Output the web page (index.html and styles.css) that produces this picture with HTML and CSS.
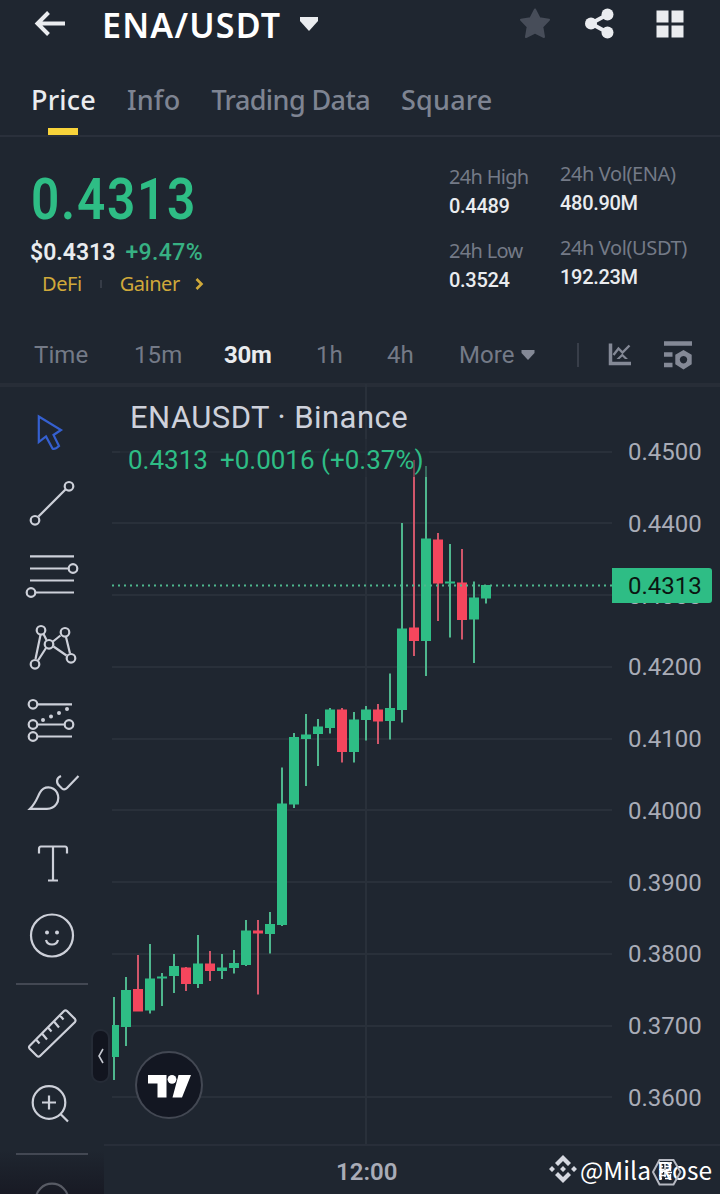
FILE: index.html
```html
<!DOCTYPE html>
<html lang="en">
<head>
    <meta charset="UTF-8" />
    <meta name="viewport" content="width=device-width, initial-scale=1.0" />
    <title>ENA/USDT</title>
    <link rel="stylesheet" href="styles.css">
</head>
<body>
    <header class="topbar">
        <svg class="back" width="32" height="26" viewBox="34 11 32 26">
            <path d="M48.500 12.500 L37.500 23.500 L48.500 34.500 M38 23.500 H65" fill="none" stroke="#eaecef" stroke-width="4" />
        </svg>
        <h1>ENA/USDT</h1>
        <svg class="caret" width="20" height="16" viewBox="0 0 20 16">
            <path d="M1 1 H19 V5 L10 15 L1 5 Z" fill="#eaecef" />
        </svg>
        <div class="actions">
            <svg width="32" height="32" viewBox="519 8 32 32">
                <path d="M535 9.500 L539.500 18.300 L549 19.700 L542.300 26.700 L544 37 L535 32.600 L526 37 L527.700 26.700 L521 19.700 L530.500 18.300 Z" fill="#474d59" stroke="#474d59" stroke-width="2" stroke-linejoin="round" />
            </svg>
            <svg width="32" height="32" viewBox="584 8 32 32">
                <g fill="#eaecef">
                    <circle cx="607.500" cy="14.500" r="6" />
                    <circle cx="591" cy="23.500" r="6" />
                    <circle cx="607.500" cy="32.500" r="6" />
                </g>
                <path d="M607.500 14.500 L591 23.500 L607.500 32.500" fill="none" stroke="#eaecef" stroke-width="4" />
            </svg>
            <svg width="28" height="28" viewBox="656 9.500 28 28">
                <path d="M656.500 10 h12 v12 h-12z M671.500 10 h12 v12 h-12z M656.500 25 h12 v12 h-12z M671.500 25 h12 v12 h-12z" fill="#eaecef" />
            </svg>
        </div>
    </header>

    <nav class="tabs">
        <a class="tab active">Price</a>
        <a class="tab">Info</a>
        <a class="tab wide">Trading Data</a>
        <a class="tab">Square</a>
    </nav>

    <section class="summary">
        <div class="quote">
            <div class="last"><span>0.4313</span></div>
            <div class="fiat"><b>$0.4313</b><span>+9.47%</span></div>
            <div class="tags">
                <span>DeFi</span>
                <i></i>
                <span>Gainer</span>
                <svg width="9" height="14" viewBox="0 0 9 14">
                    <path d="M1.500 2 L6.500 7 L1.500 12" fill="none" stroke="#d0a93a" stroke-width="2.600" />
                </svg>
            </div>
        </div>
        <dl class="stats high-low">
            <dt>24h High</dt>
            <dd>0.4489</dd>
            <dt>24h Low</dt>
            <dd>0.3524</dd>
        </dl>
        <dl class="stats volume">
            <dt>24h Vol(ENA)</dt>
            <dd>480.90M</dd>
            <dt>24h Vol(USDT)</dt>
            <dd>192.23M</dd>
        </dl>
    </section>

    <div class="intervals">
        <span class="time">Time</span>
        <span class="m15">15m</span>
        <span class="m30 active">30m</span>
        <span class="h1">1h</span>
        <span class="h4">4h</span>
        <span class="more">More</span>
        <svg class="more-caret" width="14" height="12" viewBox="0 0 14 12">
            <path d="M.500 1 H13.500 V4 L7 11 L.500 4 Z" fill="#848996" />
        </svg>
        <i class="sep"></i>
        <svg class="chart-type" width="24" height="24" viewBox="608 342 24 24">
            <path d="M610.500 342.500 V362.500 H631" fill="none" stroke="#848996" stroke-width="3.500" />
            <path d="M613.500 354 L618.500 347.500 L622.500 351.500 L629.500 344.500" fill="none" stroke="#848996" stroke-width="2.400" />
            <path d="M616.500 358 L622.300 352.500 L628 358 H625 L622.300 355.500 L619.500 358 Z" fill="#848996" />
        </svg>
        <svg class="settings" width="30" height="30" viewBox="663 339 30 30">
            <path d="M664 342.500 H692 M664 353.500 H672.500 M664 364 H672.500" stroke="#848996" stroke-width="4.500" />
            <path d="M683.500 349 L691.700 353.700 V363.300 L683.500 368.500 L675.300 363.300 V353.700 Z M683.500 355 a3.700 3.700 0 1 0 .01 0 Z" fill="#848996" fill-rule="evenodd" />
        </svg>
    </div>

    <main class="terminal">
        <aside class="tools">
            <svg class="tool cursor" viewBox="0 397 104 72">
                <path d="M38.800 416.500 V442 L46 436.500 L52.500 448.500 Q54.500 450 59 446 L53.500 435 L61 430 Z" />
            </svg>
            <svg class="tool" viewBox="0 469 104 72">
                <path d="M38.500 516.500 L65.500 489.500" />
                <circle cx="35" cy="520.300" r="4.300" />
                <circle cx="69" cy="486.300" r="4.300" />
            </svg>
            <svg class="tool" viewBox="0 541 104 72">
                <path d="M30 556.300 H74 M30 568.500 H68 M30 580.500 H74 M36 592.500 H74" />
                <circle cx="73" cy="568.500" r="4.300" />
                <circle cx="31" cy="592.500" r="4.300" />
            </svg>
            <svg class="tool" viewBox="0 613 104 72">
                <path d="M40.500 635 L35.500 659 M43.500 634 L46.500 640 M53 641.500 L60.500 635.500 M66 637 L70 653.500 M53.500 646.500 L66.500 655.500 M46 648 L38 660.500" />
                <circle cx="41" cy="630.300" r="4.300" />
                <circle cx="65" cy="632.300" r="4.300" />
                <circle cx="49" cy="644.300" r="4.300" />
                <circle cx="35" cy="664.300" r="4.300" />
                <circle cx="71" cy="658.300" r="4.300" />
            </svg>
            <svg class="tool" viewBox="0 685 104 72">
                <path d="M38 704.300 H72 M38 724.500 H64 M38 736.500 H72" />
                <path class="dots" d="M43 720 h.01 M51 716.500 h.01 M59 713 h.01 M67 709 h.01" />
                <circle cx="33" cy="704.300" r="4.300" />
                <circle cx="33" cy="724.500" r="4.300" />
                <circle cx="69" cy="724.500" r="4.300" />
                <circle cx="33" cy="736.500" r="4.300" />
            </svg>
            <svg class="tool" viewBox="0 757 104 72">
                <path d="M30 808.800 C36 803 37.500 797 40 792.500 C44 785.500 53 786 57 792.500 C61 801 55 808.800 47 808.800 Z" />
                <path d="M61 776 C56 778 56 783 59.500 786 L62 788.500 Q64.500 790.500 67 788 L78.500 776" />
            </svg>
            <svg class="tool" viewBox="0 829 104 72">
                <path d="M39 853.500 V849 Q39 846.500 41 846.500 H65 Q67 846.500 67 849 V853.500 M53 846.500 V880.500 M48 880.500 H58" />
            </svg>
            <svg class="tool" viewBox="0 901 104 72">
                <circle cx="52" cy="935.500" r="21" />
                <path class="dots" d="M47 932.500 h.01 M57 932.500 h.01" />
                <path d="M46 940 C47.500 946 56.500 946 58 940" />
            </svg>
            <hr>
            <svg class="tool" viewBox="0 998 104 72">
                <path d="M29.500 1046 L64 1011 Q65.500 1009.500 67 1011 L75 1019 Q76 1020.500 75 1022 L40 1056 Q38.500 1057.500 37 1056 L29.500 1048.500 Q28.500 1047 29.500 1046 Z M36 1039.500 L39.500 1043.500 M42 1033.500 L47 1039.500 M48 1027.500 L51.500 1031.500 M54 1021.500 L59 1027.500 M60 1015.500 L63.500 1019.500" />
            </svg>
            <svg class="tool" viewBox="0 1070 104 72">
                <circle cx="49" cy="1102.500" r="16.300" />
                <path d="M42 1102.500 H56 M49 1095.500 V1109.500 M60.500 1114 L68 1121.500" />
            </svg>
            <hr>
            <svg class="tool last-tool" viewBox="0 1155 104 39">
                <circle cx="52" cy="1200" r="16.300" />
            </svg>
        </aside>

        <div class="chart">
            <svg class="plot" width="508" height="760" viewBox="104 384 508 760">
                <g id="grid"></g>
                <g id="candles"></g>
                <path class="price-line" d="M112 585.500 H612" />
            </svg>
            <div class="legend">
                <div class="symbol">ENAUSDT · Binance</div>
                <div class="change"><span>0.4313</span><span>+0.0016 (+0.37%)</span></div>
            </div>
            <div class="handle">
                <svg width="8" height="16" viewBox="0 0 8 16">
                    <path d="M6 1 L2 8 L6 15" fill="none" stroke="#c5c8d0" stroke-width="1.600" />
                </svg>
            </div>
            <div class="tv">
                <svg width="44" height="24" viewBox="0 0 44 24">
                    <path d="M0 1 H18.500 V23.500 H9.500 V9.500 H0 Z M30.500 1 H43 L34 23.500 H24.500 Z" fill="#fff" />
                    <circle cx="24" cy="5.300" r="4.400" fill="#fff" />
                </svg>
            </div>
            <div class="time-axis">12:00</div>
        </div>

        <div class="axis">
            <span>0.4500</span>
            <span>0.4400</span>
            <span>0.4300</span>
            <span>0.4200</span>
            <span>0.4100</span>
            <span>0.4000</span>
            <span>0.3900</span>
            <span>0.3800</span>
            <span>0.3700</span>
            <span>0.3600</span>
            <div class="price-tag">0.4313</div>
        </div>
    </main>

    <div class="watermark">
        <svg class="hex" width="30" height="28" viewBox="652 1158 30 28">
            <path d="M659.500 1160 H673.500 L680.500 1172 L673.500 1184.500 H659.500 L653 1172 Z" fill="none" stroke="#b6b9c2" stroke-width="2" />
            <path d="M659 1163 h13 M660 1166.500 h3 m2 0 h5 M659 1169.500 h5 m2 0 h5 M660 1172.500 h3 m3 0 h6 M659 1175.500 h7 m2 0 h3 M660 1178.500 h2 m3 0 h6 M660.500 1162 v8 m0 3 v6 M665 1163 v14 M670.500 1162 v9 m0 3 v5" fill="none" stroke="#fff" stroke-width="1.400" />
        </svg>
        <svg width="28" height="28" viewBox="0 0 28 28">
            <path d="M14 0 L22 8 L19 11 L14 6 L9 11 L6 8 Z M14 28 L22 20 L19 17 L14 22 L9 17 L6 20 Z M14 11 L17 14 L14 17 L11 14 Z M3 11 L6 14 L3 17 L0 14 Z M25 11 L28 14 L25 17 L22 14 Z" fill="#d5d8e0" />
        </svg>
        <span>@Mila Rose</span>
    </div>

    <script>
        // [x, wick top, wick bottom, body top, body bottom, down]
        const candles = [
            [114, 997, 1080, 1025, 1057],
            [126, 977, 1046, 990, 1027],
            [138, 955, 1011, 989, 1011.5, 1],
            [150, 944, 1013.5, 978.5, 1010.5],
            [162, 973, 1006, 976.5, 978.5],
            [174, 954, 993, 966, 976],
            [186, 967, 991, 967.5, 984, 1],
            [198, 935, 988, 963.5, 984],
            [210, 951, 981, 963.5, 971, 1],
            [222, 954, 979, 967.5, 971],
            [234, 950, 973.5, 963, 968],
            [246, 920, 966, 930.5, 965],
            [258, 920, 994.5, 930.5, 933.5, 1],
            [270, 912, 953.5, 924, 934],
            [282, 767.5, 926, 803.5, 925],
            [294, 733, 808, 737, 804.5],
            [306, 714, 786, 734.5, 739],
            [318, 719, 766, 726.5, 734],
            [330, 708, 733.5, 709.5, 728],
            [342, 708, 762.5, 709.5, 752, 1],
            [354, 712, 762.5, 719.5, 752],
            [366, 706, 740.5, 709.5, 720],
            [378, 704, 744, 709.5, 721.5, 1],
            [390, 673.5, 739.5, 708, 721],
            [402, 523, 722.5, 628.5, 710],
            [414, 460, 656, 627.5, 641, 1],
            [426, 466, 676, 538.5, 641],
            [438, 533, 621, 539.5, 583.5, 1],
            [450, 544, 637.5, 581.5, 583.5],
            [462, 549, 639.5, 582.5, 620, 1],
            [474, 581.5, 663, 597.5, 619.5],
            [486, 585, 603.5, 585, 598.5]
        ];

        let out = "";
        for (const [x, high, low, top, bottom, down] of candles) {
            const left = Math.max(x - 5, 112);
            out += `<g class="${down ? "down" : "up"}">
                <rect x="${x - 1}" y="${high}" width="2" height="${low - high}" />
                <rect class="bar" x="${left}" y="${top}" width="${x + 5 - left}" height="${bottom - top}" />
            </g>`;
        }
        document.getElementById("candles").innerHTML = out;

        let lines = "";
        for (let i = 0; i < 10; i++) {
            const y = Math.round(451.5 + i * 71.75);
            lines += `<path d="M112 ${y} H612" />`;
        }
        lines += `<path d="M366 384 V1144" />`;
        document.getElementById("grid").innerHTML = lines;
    </script>
</body>
</html>
```

FILE: styles.css
```css
* {
    box-sizing: border-box;
}
body {
    margin: 0;
    width: 720px;
    height: 1194px;
    overflow: hidden;
    position: relative;
    background: #1f2630;
    color: #eaecef;
    font-family: Roboto, "Liberation Sans", sans-serif;
}
svg {
    display: block;
    flex: none;
}
span, a, b {
    white-space: nowrap;
}

/* header */
.topbar {
    display: flex;
    align-items: center;
    height: 48px;
    padding: 0 36px 0 34px;
}
h1 {
    margin: 2px 0 0 36px;
    width: 183px;
    font-family: "Noto Sans", sans-serif;
    font-size: 34px;
    font-weight: 650;
    line-height: 48px;
    letter-spacing: 1.2px;
    color: #fff;
}
.caret {
    margin-left: 14px;
}
.actions {
    display: flex;
    align-items: center;
    margin-left: auto;
}
.actions svg + svg {
    margin-left: 33px;
}
.actions svg:last-child {
    margin-left: 40px;
}

/* tabs */
.tabs {
    display: flex;
    height: 89px;
    padding: 32px 31px 0;
    gap: 31px;
    border-bottom: 2px solid #2a303b;
}
.tab {
    position: relative;
    font-family: "Noto Sans", sans-serif;
    font-size: 27px;
    font-weight: 550;
    line-height: 40px;
    letter-spacing: 0.2px;
    color: #7e8492;
}
.tab.wide {
    letter-spacing: -0.6px;
}
.tab.active {
    color: #eaecef;
}
.tab.active::after {
    content: "";
    position: absolute;
    left: 17px;
    bottom: 0;
    width: 30px;
    height: 7px;
    background: #f8d33a;
}

/* quote */
.summary {
    display: flex;
    height: 188px;
    padding: 22px 0 0 31px;
}
.quote {
    width: 418px;
}
.last {
    height: 80px;
    font-size: 57px;
    font-weight: 600;
    line-height: 82px;
    letter-spacing: 2px;
    color: #2ebd85;
}
.last span {
    display: inline-block;
    transform: scaleX(0.87);
    transform-origin: left;
}
.fiat {
    display: flex;
    gap: 10px;
    font-size: 23px;
    line-height: 28px;
}
.fiat b {
    margin-left: -1px;
    font-weight: 600;
}
.fiat span {
    font-weight: 500;
    letter-spacing: 0.4px;
    color: #37b183;
}
.tags {
    display: flex;
    align-items: center;
    margin: 2px 0 0 11px;
    font-family: "Noto Sans", sans-serif;
    font-size: 20px;
    line-height: 30px;
    letter-spacing: -0.45px;
    color: #d0a93a;
}
.tags i {
    width: 2px;
    height: 8px;
    margin: 0 18px;
    background: #363c47;
}
.tags svg {
    margin-left: 15px;
}
.stats {
    margin: 0;
    font-size: 20px;
}
.stats dt {
    font-family: "Noto Sans", sans-serif;
    line-height: 30px;
    letter-spacing: -0.4px;
    color: #747a87;
}
.high-low dt {
    letter-spacing: -0.7px;
}
.stats dd {
    margin: 0 0 16px;
    font-weight: 500;
    line-height: 28px;
    letter-spacing: -0.3px;
}
.high-low {
    width: 111px;
    padding-top: 3px;
}

/* interval row */
.intervals {
    display: flex;
    align-items: center;
    height: 62px;
    padding: 2px 0 0 34px;
    font-size: 24px;
    letter-spacing: 0.1px;
    color: #747a87;
    border-bottom: 4px solid #272d37;
}
.intervals .active {
    font-weight: 700;
    letter-spacing: -0.3px;
    color: #eaecef;
}
.time {
    width: 100px;
}
.m15 {
    width: 90px;
}
.m30 {
    width: 92px;
}
.h1 {
    width: 71px;
}
.h4 {
    width: 72px;
}
.more {
    width: 53px;
}
.more-caret {
    margin-left: 9px;
}
.sep {
    width: 2px;
    height: 24px;
    margin: 0 29px 0 42px;
    background: #383e49;
}
.settings {
    margin-left: 31px;
}

/* drawing tools */
.terminal {
    display: flex;
    height: 807px;
}
.tools {
    width: 104px;
    padding-top: 10px;
    background: linear-gradient(rgba(18, 20, 30, 0), #181a24) bottom / 100% 44px no-repeat;
}
.tool {
    width: 104px;
    height: 72px;
    fill: none;
    stroke: #cdd0d9;
    stroke-width: 2.2;
}
.tool .dots {
    stroke-width: 4;
    stroke-linecap: round;
}
.cursor {
    stroke: #3560d0;
}
.last-tool {
    height: 39px;
    opacity: 0.35;
}
.tools hr {
    width: 72px;
    height: 2px;
    margin: 10px 16px 13px;
    border: none;
    background: #434853;
}
.tools hr:last-of-type {
    margin: 11px 16px 0;
}

/* chart */
.chart {
    position: relative;
    width: 508px;
}
.plot {
    margin-top: -3px;
}
#grid path {
    fill: none;
    stroke: #29303a;
    stroke-width: 2;
}
.up {
    fill: #4fb78e;
}
.up .bar {
    fill: #2ebd85;
}
.down {
    fill: #d0566a;
}
.down .bar {
    fill: #f6465d;
}
.price-line {
    stroke: #4fb78e;
    stroke-width: 2;
    stroke-dasharray: 2 4;
}
.legend {
    position: absolute;
    left: 16px;
    top: 10px;
    height: 80px;
    padding: 0 6px 0 9px;
    background: linear-gradient(rgba(31, 38, 48, 0.5), rgba(31, 38, 48, 0.5)) 0 100% / 100% 38px no-repeat;
}
.symbol {
    padding-left: 1px;
    font-size: 31px;
    line-height: 42px;
    letter-spacing: 0.45px;
    color: #ced1db;
}
.change {
    display: flex;
    gap: 12px;
    margin-left: -1px;
    font-size: 26px;
    line-height: 42px;
    color: #2ebd85;
}
.handle {
    position: absolute;
    left: -11px;
    top: 644px;
    display: flex;
    align-items: center;
    justify-content: center;
    width: 15px;
    height: 50px;
    border-radius: 7px;
    background: #12151f;
    box-shadow: 0 0 0 2px #252b36;
}
.tv {
    position: absolute;
    left: 31px;
    top: 664px;
    display: flex;
    align-items: center;
    justify-content: center;
    width: 68px;
    height: 68px;
    padding: 1px 0 0 1px;
    border: 2px solid #434853;
    border-radius: 50%;
    background: #131722;
}
.time-axis {
    width: 616px;
    padding-left: 232px;
    border-top: 2px solid #282e39;
    font-size: 24px;
    font-weight: 600;
    line-height: 53px;
    color: #a9acb7;
}

/* price scale */
.axis {
    position: relative;
    width: 108px;
    padding-top: 29px;
}
.axis span {
    display: block;
    height: 71.75px;
    padding-left: 16px;
    font-size: 24px;
    line-height: 72px;
    color: #a9acb7;
}
.price-tag {
    position: absolute;
    left: 0;
    top: 181px;
    width: 100px;
    height: 35px;
    padding-left: 16px;
    border-radius: 0 3px 3px 0;
    background: #2ebd85;
    color: #0b1512;
    font-size: 24px;
    line-height: 36px;
}

.watermark {
    position: absolute;
    left: 549px;
    top: 1151px;
    display: flex;
    align-items: center;
    height: 36px;
    font-family: "Noto Sans CJK SC", sans-serif;
    font-size: 24.5px;
    letter-spacing: 0.1px;
    color: #fff;
}
.watermark span {
    margin-left: 3px;
}
.hex {
    position: absolute;
    left: 103px;
    top: 7px;
}
```
